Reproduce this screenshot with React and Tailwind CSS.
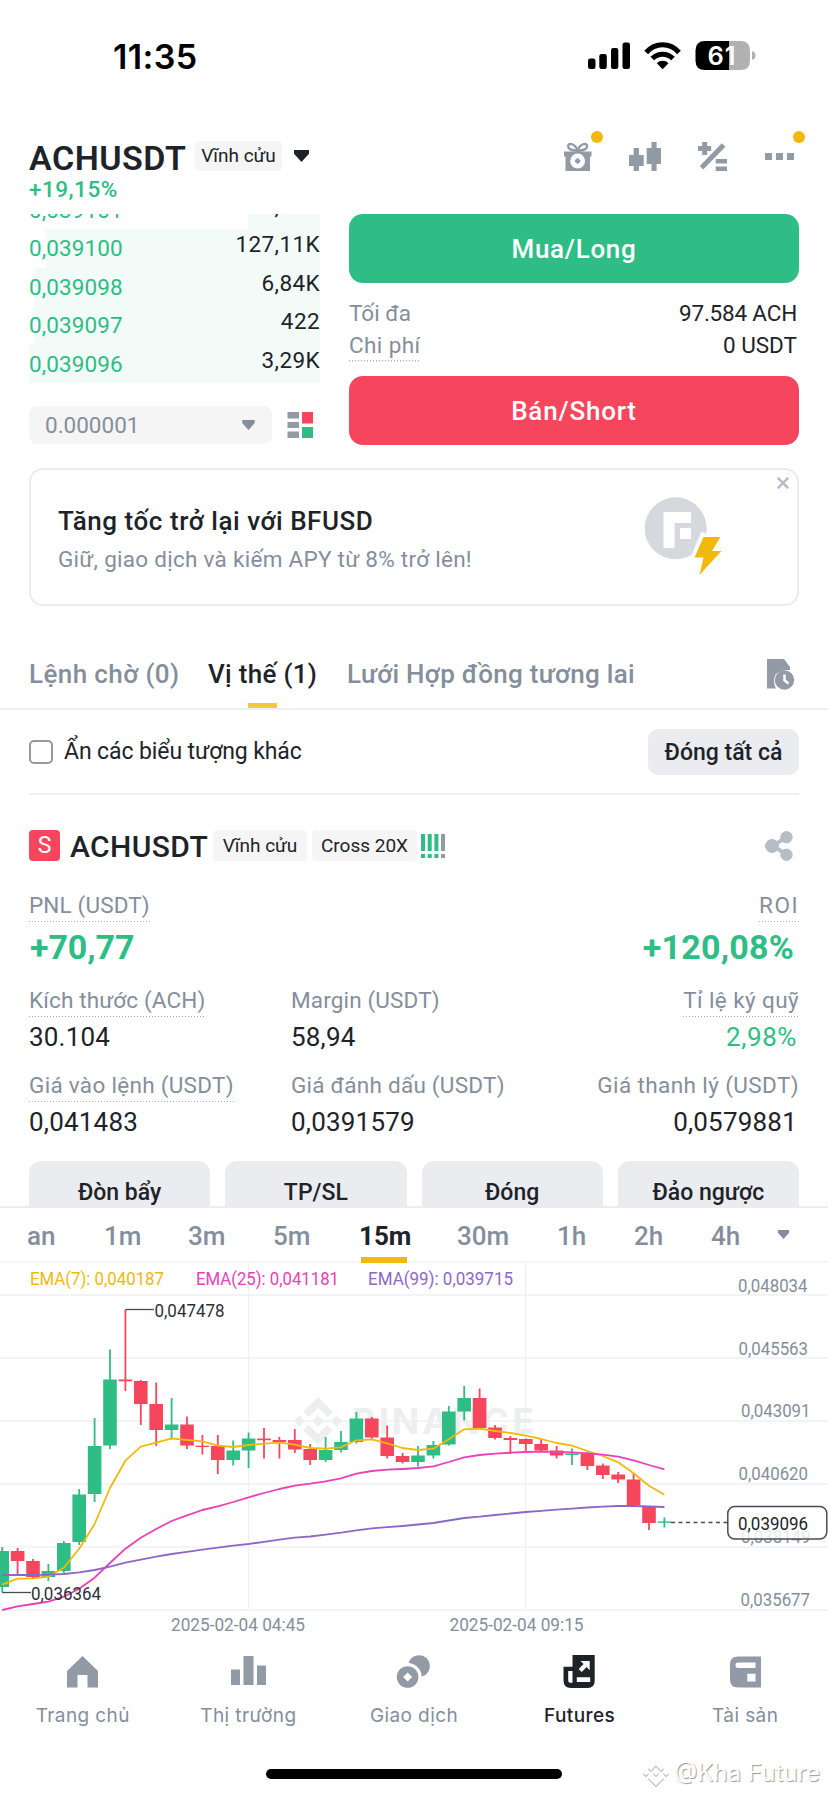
import React from "react"
import { SiBinance } from "react-icons/si"

const asks = [
  { price: "0,039101", amount: "20,99K", bar: "w-[72px]" },
  { price: "0,039100", amount: "127,11K", bar: "w-[274px]" },
  { price: "0,039098", amount: "6,84K", bar: "w-[285px]" },
  { price: "0,039097", amount: "422", bar: "w-[286px]" },
  { price: "0,039096", amount: "3,29K", bar: "w-[291px]" },
]

// [high, body top, body bottom, low, rising]
const candles = [
  [267, 271, 307, 312, 1], [268, 271, 281, 294, 0], [279, 281, 297, 298, 0], [284, 291, 297, 301, 1],
  [261, 263, 291, 293, 1], [209, 214.5, 262, 265, 1], [138, 166, 214, 222, 1], [69.5, 99.5, 165.5, 169, 1],
  [29.5, 99.5, 101.3, 111, 0], [100, 101, 124, 145, 0], [102.5, 124, 150, 166, 0], [118, 144.5, 150, 159.5, 1],
  [136.5, 144.5, 165.5, 169, 0], [155, 165.7, 167, 174.5, 0], [155, 166, 180, 194, 0], [160.5, 170.5, 180, 185.5, 1],
  [152.5, 158.5, 170.5, 188, 1], [148, 158.5, 160.2, 178.5, 0], [157, 160, 162, 178.5, 0], [149, 160, 169.5, 173, 0],
  [164, 169, 180, 185, 0], [157, 170, 180, 182, 1], [151, 162, 170, 172.5, 1], [132, 138.5, 162, 163.5, 1],
  [137, 138.5, 157.5, 159, 0], [145.5, 157.5, 176, 178.5, 0], [173, 176, 182, 183.5, 0], [166, 175.5, 182, 186.5, 1],
  [161, 165, 175.5, 178.5, 1], [126, 131.5, 164.5, 165.5, 1], [106, 118, 131.5, 140.5, 1], [108.5, 118, 148, 149, 0],
  [145, 147.5, 158, 159.5, 0], [156, 158, 160, 174, 0], [158.5, 159, 164, 171.5, 0], [159.5, 164, 170.5, 172, 0],
  [166, 170.5, 175.5, 178.5, 0], [168.5, 173.5, 175, 185, 1], [172, 173.5, 186, 190, 0], [183.5, 185.5, 195, 199, 0],
  [192, 194.5, 199.5, 203, 0], [193.5, 199.5, 225.5, 225.5, 0], [226.5, 226.5, 243, 250, 0], [237.5, 241.4, 242.8, 247.5, 1],
]

const ema7 = [
  304.7, 298.7, 298.3, 296.7, 287.7, 268.7, 244, 208, 180.7, 166.7, 162.7, 158.3, 160, 161.3, 165.7, 167, 165, 163.7, 162.7, 164.7, 168, 168.7,
  167.3, 160.3, 159.3, 163.3, 168, 170, 168.7, 159.3, 149.3, 148.7, 151, 153, 155.7, 159, 163, 165.7, 171, 176, 182.3, 193.3, 205.7, 214.7,
]
const ema25 = [
  330, 326.3, 324, 321.7, 316.7, 308.7, 297.7, 283, 268.7, 257.7, 249, 241, 235.3, 230, 226.3, 222, 217.3, 213, 209, 205.7, 203.7, 201.3,
  198.3, 193.7, 191, 189.7, 189, 188, 186.3, 182, 177.3, 175, 173.7, 172.7, 172, 171.7, 172, 172.3, 173.3, 174.7, 176.7, 180.3, 185, 189.3,
]
const ema99 = [
  295, 295, 295, 294.7, 294, 292.3, 290, 286.7, 282.7, 279.7, 276.7, 274, 271.8, 269.7, 267.7, 265.7, 264, 261.8, 259.7, 257.7, 256.5, 254.7,
  252.7, 250.3, 248.3, 247.2, 246, 244.5, 243, 240.5, 238, 236.7, 235, 233.5, 232, 230.8, 229.7, 228.6, 227.5, 226.7, 226, 226, 226.5, 227,
]

const candleX = (i) => 2.2 + i * 15.4
const toPoints = (values) => values.map((y, i) => `${candleX(i)},${y}`).join(" ")

const priceAxis = [
  ["0,048034", 738, 12], ["0,045563", 738.5, 74.7], ["0,043091", 741, 137.3],
  ["0,040620", 738.5, 200.3], ["0,038149", 741, 263.3], ["0,035677", 740.5, 326],
]

const Triangle = ({ className }) => (
  <svg viewBox="0 0 15 12" className={className} fill="currentColor">
    <path d="M0 0H15V3.7L7.5 12L0 3.7Z" />
  </svg>
)

const StatusBar = () => (
  <div className="flex h-[100px] shrink-0 items-start justify-between pl-[113px] pr-[72px] text-black">
    <span className="mt-[36px] font-[Inter,sans-serif] text-[34px] font-semibold leading-[42px] tracking-[0.4px]">11:35</span>
    <svg className="mt-[41px] h-[30px] w-[168px]" viewBox="588 41 168 30">
      <rect x="588" y="58.500" width="7.500" height="10.500" rx="2.200" />
      <rect x="599.300" y="54" width="7.500" height="15" rx="2.200" />
      <rect x="611" y="48" width="7.300" height="21" rx="2.200" />
      <rect x="622.500" y="42.500" width="7.500" height="26.500" rx="2.200" />
      <g fill="none" stroke="#000" strokeWidth="5">
        <path d="M646.200 52.500C655.300 42.300 670 42.300 679 52.500" />
        <path d="M652.300 58.600C658 52.700 667.200 52.700 673 58.600" />
      </g>
      <path d="M656.800 63.300C659.800 60 665.400 60 668.500 63.300L662.600 69.200Z" />
      <path d="M729 41H740.500Q750 41 750 50.500V60.500Q750 70 740.500 70H729Z" fill="#b1b1b4" />
      <path d="M729 41H705Q695.500 41 695.500 50.500V60.500Q695.500 70 705 70H729Z" />
      <path d="M752 51Q755.500 52 755.500 55.500Q755.500 59 752 60Z" fill="#b1b1b4" />
      <text x="707.500" y="64.800" textLength="28" className="font-[Inter,sans-serif] text-[25.500px] font-semibold" fill="#fff">61</text>
    </svg>
  </div>
)

const Header = () => (
  <header className="flex h-[114px] shrink-0 flex-col px-[29px]">
    <div className="mt-[37px] flex h-[38px] items-center">
      <h1 className="w-[166px] whitespace-nowrap pt-[3px] text-[34px] font-semibold leading-[38px] tracking-[0.5px]">ACHUSDT</h1>
      <span className="flex h-[30px] w-[87px] items-center justify-center rounded bg-[#f5f5f5] pt-px text-[19px]">Vĩnh cửu</span>
      <Triangle className="ml-3 h-3 w-[15px]" />
      <div className="ml-auto flex items-center text-[#929aa5]">
        <div className="relative">
          <svg className="h-[29px] w-[28px]" viewBox="0 0 28 29">
            <path d="M0 9.500H27.500V14.500H26V29H1.500V14.500H0Z" fill="currentColor" />
            <g fill="none" stroke="currentColor" strokeWidth="2.400">
              <path d="M13.500 9C12 2 4 -0.500 4.200 4.500C4.400 8 9 8 13.500 9Z" />
              <path d="M13.700 9C15.200 2 23.200 -0.500 23 4.500C22.800 8 18.200 8 13.700 9Z" />
            </g>
            <circle cx="13.600" cy="19" r="7.400" fill="#fff" />
            <path d="M13.600 15.700L16.900 19L13.600 22.300L10.300 19Z" fill="currentColor" />
          </svg>
          <span className="absolute -top-[11px] left-[27px] size-3 rounded-full bg-[#f0b90b]" />
        </div>
        <svg className="ml-[37px] h-[29px] w-8" viewBox="0 0 32 29" fill="currentColor">
          <path d="M4.700 6H10V13H14.700V24H10V29H4.700V24H0V13H4.700Z" />
          <path d="M22.500 0H27.600V6H32V22H27.600V29H22.500V22H17.700V6H22.500Z" />
        </svg>
        <svg className="ml-[37px] h-[29px] w-[29px]" viewBox="0 0 29 29" fill="currentColor">
          <path d="M4.200 0H9.200V4H13.200V9H9.200V13H4.200V9H0V4H4.200Z" />
          <path d="M23.800 1.200L27.400 4.800L5.200 27.500L1.800 24Z" />
          <path d="M17.700 17H29V21.500H17.700ZM17.700 24.400H29V29H17.700Z" />
        </svg>
        <div className="relative ml-[38px] mr-[5px] flex w-[29px] justify-between">
          <span className="size-[7px] bg-current" />
          <span className="size-[7px] bg-current" />
          <span className="size-[7px] bg-current" />
          <span className="absolute -top-[22px] left-7 size-3 rounded-full bg-[#f0b90b]" />
        </div>
      </div>
    </div>
    <p className="text-[22.500px] font-medium leading-7 tracking-[0.5px] text-[#2ebd85]">+19,15%</p>
  </header>
)

const OrderBook = () => (
  <div className="w-[291px]">
    <div className="flex h-[169px] flex-col justify-end overflow-hidden">
      {asks.map((row) => (
        <div key={row.price} className="relative flex h-[38.500px] shrink-0 items-center justify-between text-[22.500px]">
          <div className={`absolute right-0 h-full bg-[#f3fbf8] ${row.bar}`} />
          <span className="relative pt-0.5 tracking-[0.1px] text-[#2ebd85]">{row.price}</span>
          <span className="relative pb-[6px] tracking-[0.4px]">{row.amount}</span>
        </div>
      ))}
    </div>
    <div className="mt-[23px] flex items-center">
      <div className="flex h-[38px] w-[243px] items-center justify-between rounded-lg bg-[#f5f5f5] pl-4 pr-[17px] text-[22.500px] text-[#848e9c]">
        <span className="pt-0.5">0.000001</span>
        <Triangle className="h-[10px] w-[13px]" />
      </div>
      <svg className="ml-[15px] h-[26px] w-[26px]" viewBox="0 0 26 26">
        <path d="M0.500 0H12V6.500H0.500ZM0.500 10H12V16H0.500ZM0.500 19.500H12V26H0.500Z" fill="#929aa5" />
        <path d="M15 0H26V11.500H15Z" fill="#f6465d" />
        <path d="M15 15H26V26H15Z" fill="#2ebd85" />
      </svg>
    </div>
  </div>
)

const TradeButtons = () => (
  <div className="w-[450px] text-[22.500px]">
    <button className="block h-[68.500px] w-full rounded-[14px] bg-[#2ebd85] pt-0.5 text-[26px] font-medium tracking-[0.7px] text-white">Mua/Long</button>
    <div className="mt-[15px] flex h-8 items-center justify-between pr-0.5">
      <span className="text-[#848e9c]">Tối đa</span>
      <span className="tracking-[-0.2px]">97.584 ACH</span>
    </div>
    <div className="flex h-8 items-start justify-between pr-0.5">
      <Label dotted className="tracking-[0.4px] -mt-px">Chi phí</Label>
      <span className="leading-[30px]">0 USDT</span>
    </div>
    <button className="mt-[14px] block h-[69px] w-full rounded-[14px] bg-[#f6465d] pt-0.5 text-[26px] font-medium tracking-[0.8px] text-white">Bán/Short</button>
  </div>
)

const Label = ({ children, dotted, className = "tracking-[0.15px]" }) => (
  <span
    className={`h-[33px] whitespace-nowrap text-[22.500px] leading-8 text-[#848e9c] ${className} ${
      dotted
        ? "bg-[repeating-linear-gradient(90deg,#a3aab4_0px_1.5px,transparent_1.5px_3px)] bg-[length:100%_1.5px] bg-bottom bg-no-repeat"
        : ""
    }`}
  >
    {children}
  </span>
)

const Banner = () => (
  <section className="relative mx-[29px] mt-6 flex h-[138px] shrink-0 flex-col rounded-[14px] border-2 border-[#eaecef] px-[27px]">
    <h2 className="mt-[34px] text-[26px] font-medium leading-[34px] tracking-[0.550px]">Tăng tốc trở lại với BFUSD</h2>
    <p className="mt-[5px] text-[22.500px] leading-8 tracking-[0.280px] text-[#848e9c]">Giữ, giao dịch và kiếm APY từ 8% trở lên!</p>
    <svg className="absolute left-[614px] top-[27px] h-[80px] w-[80px]" viewBox="645 497 80 80">
      <circle cx="675.700" cy="528.300" r="31" fill="#d5d8dd" />
      <path d="M663.500 512H691V523H674.500V548H663.500Z" fill="#fff" />
      <path d="M680 528H691V539H680Z" fill="#fff" />
      <path d="M702 533L690 561L700 564L718 540Z" fill="#fff" stroke="#fff" strokeWidth="2" />
      <path d="M703.500 537H720.500L712 551H721.500L699.500 575L703.500 557.500H694.500Z" fill="#f0b90b" />
    </svg>
    <svg className="absolute right-[8px] top-[7px] size-3" viewBox="0 0 12 12" stroke="#b7bdc6" strokeWidth="2.500">
      <path d="M0.800 0.800L11.200 11.200M11.200 0.800L0.800 11.200" />
    </svg>
  </section>
)

const Tabs = () => (
  <div className="flex h-[104px] shrink-0 items-end border-b-2 border-[#eeeff1] px-[29px] text-[26px] font-medium text-[#848e9c]">
    <span className="w-[179px] whitespace-nowrap pb-4 leading-9 tracking-[0.4px]">Lệnh chờ (0)</span>
    <span className="relative w-[139px] whitespace-nowrap pb-4 leading-9 tracking-[0.3px] text-[#1e2329]">
      Vị thế (1)
      <span className="absolute bottom-0 left-[40px] h-[5px] w-[29px] bg-[#f5c842]" />
    </span>
    <span className="whitespace-nowrap pb-4 leading-9 tracking-[0.3px]">Lưới Hợp đồng tương lai</span>
    <svg className="mb-[18px] ml-auto mr-1 h-[31px] w-[28px]" viewBox="0 0 28 31">
      <path d="M0 0H17L23 8V11H18Q7 13 7 21Q7 26 9 29.500H0Z" fill="#929aa5" />
      <circle cx="17.500" cy="21" r="9.700" fill="#929aa5" />
      <path d="M17.500 15.500V21.300L21.500 24.500" fill="none" stroke="#fff" strokeWidth="2.500" />
    </svg>
  </div>
)

const FilterRow = () => (
  <div className="mx-[29px] flex h-[85px] shrink-0 items-center justify-between border-b-2 border-[#eeeff1]">
    <label className="flex items-center gap-[11px] text-[23px] tracking-[-0.1px]">
      <span className="size-6 rounded-[5px] border-2 border-[#929aa5]" />
      <span className="pt-0.5">Ẩn các biểu tượng khác</span>
    </label>
    <button className="h-[46px] w-[151px] rounded-[10px] bg-[#eaecef] pt-[3px] text-[23px] font-medium">Đóng tất cả</button>
  </div>
)

const Stat = ({ label, value, dotted, right, green, labelClass }) => (
  <div className={`flex flex-col gap-[5px] ${right ? "items-end" : "items-start"}`}>
    <Label dotted={dotted} className={labelClass}>{label}</Label>
    <span className={`whitespace-nowrap text-[26px] leading-[30px] ${right ? "mr-0.5" : ""} ${green ? "tracking-[0.6px] text-[#2ebd85]" : "tracking-[0.2px]"}`}>
      {value}
    </span>
  </div>
)

const Position = () => (
  <section className="flex h-[411px] shrink-0 flex-col overflow-hidden px-[29px] pt-[35px]">
    <div className="flex h-[31px] shrink-0 items-center">
      <span className="flex size-[31px] items-center justify-center rounded bg-[#f6465d] pt-0.5 text-[23px] text-white">S</span>
      <h2 className="ml-[10px] w-[143px] whitespace-nowrap pt-0.5 text-[30px] font-medium tracking-[0.4px]">ACHUSDT</h2>
      <span className="flex h-[31px] w-[94px] items-center justify-center rounded bg-[#f5f5f5] pt-px text-[19px]">Vĩnh cửu</span>
      <span className="ml-[5px] flex h-[31px] w-[105px] items-center justify-center rounded bg-[#f5f5f5] pt-px text-[19px]">Cross 20X</span>
      <svg className="ml-1 h-6 w-6" viewBox="0 0 24 24">
        <path d="M0 0H4V17H0ZM0 20H4V24H0ZM6.700 0H10.700V17H6.700ZM6.700 20H10.700V24H6.700ZM13.400 0H17.400V17H13.400ZM13.400 20H17.400V24H13.400Z" fill="#2ebd85" />
        <path d="M20 0H24V17H20ZM20 20H24V24H20Z" fill="#929aa5" />
      </svg>
      <svg className="ml-auto mr-[6px] h-[30px] w-7" viewBox="0 0 28 30" fill="#b7bdc6" stroke="#b7bdc6">
        <path d="M22 6L7.500 14.800L22 23.600" fill="none" strokeWidth="4" />
        <circle cx="21.500" cy="6.200" r="5.700" />
        <circle cx="7" cy="15" r="6.500" />
        <circle cx="21.500" cy="23.800" r="5.700" />
      </svg>
    </div>
    <div className="mt-[28px] flex shrink-0 justify-between">
      <div className="flex flex-col items-start gap-[7px]">
        <Label dotted>PNL (USDT)</Label>
        <span className="ml-px text-[34px] font-bold leading-9 tracking-[-0.1px] text-[#2ebd85]">+70,77</span>
      </div>
      <div className="flex flex-col items-end gap-[7px]">
        <Label dotted className="tracking-[1.5px]">ROI</Label>
        <span className="mr-[5px] text-[34px] font-bold leading-9 tracking-[0.2px] text-[#2ebd85]">+120,08%</span>
      </div>
    </div>
    <div className="mt-[19px] grid shrink-0 grid-cols-[262px_1fr_auto] gap-y-[17px]">
      <Stat label="Kích thước (ACH)" value="30.104" dotted />
      <Stat label="Margin (USDT)" value="58,94" />
      <Stat label="Tỉ lệ ký quỹ" value="2,98%" dotted right green labelClass="tracking-[0.4px]" />
      <Stat label="Giá vào lệnh (USDT)" value="0,041483" dotted labelClass="tracking-[0.3px]" />
      <Stat label="Giá đánh dấu (USDT)" value="0,0391579" labelClass="tracking-[0.250px]" />
      <Stat label="Giá thanh lý (USDT)" value="0,0579881" right labelClass="tracking-[0.4px]" />
    </div>
    <div className="mt-6 grid shrink-0 grid-cols-4 gap-x-[15px] text-[23px] font-medium">
      <button className="h-[62px] rounded-[12px] bg-[#eaecef] pt-0.5">Đòn bẩy</button>
      <button className="h-[62px] rounded-[12px] bg-[#eaecef] pt-0.5">TP/SL</button>
      <button className="h-[62px] rounded-[12px] bg-[#eaecef] pt-0.5">Đóng</button>
      <button className="h-[62px] rounded-[12px] bg-[#eaecef] pt-0.5">Đảo ngược</button>
    </div>
  </section>
)

const Timeframes = () => (
  <div className="flex h-[57px] shrink-0 border-b-2 border-t-2 border-b-[#f5f5f5] border-t-[#eaecef] pl-[28px] text-[26px] font-medium leading-[56px] text-[#848e9c]">
    <div className="flex w-[76px] shrink-0 overflow-hidden"><span className="-ml-px">an</span></div>
    <span className="w-[84px] shrink-0">1m</span>
    <span className="w-[85px] shrink-0">3m</span>
    <span className="w-[86px] shrink-0">5m</span>
    <span className="relative w-[98px] shrink-0 font-bold text-[#1e2329]">
      15m
      <span className="absolute -bottom-0.5 left-[2px] h-[6px] w-[46px] bg-[#f0b90b]" />
    </span>
    <span className="w-[100px] shrink-0">30m</span>
    <span className="w-[77px] shrink-0">1h</span>
    <span className="w-[77px] shrink-0">2h</span>
    <span className="w-[66px] shrink-0">4h</span>
    <Triangle className="mt-[22px] h-[9px] w-[13px]" />
  </div>
)

const ChartText = ({ x, y, width, fill, children }) => (
  <text x={x} y={y} textLength={width} lengthAdjust="spacingAndGlyphs" fill={fill}>{children}</text>
)

const Chart = () => (
  <svg className="block h-[377px] w-[828px] shrink-0 text-[18px]" viewBox="0 -17 828 377" fill="#848e9c">
    <g stroke="#f3f4f5" strokeWidth="2">
      {[15, 78, 141, 204, 267, 330].map((y) => (
        <path key={y} d={`M0 ${y}H828`} />
      ))}
      <path d="M248.500 -17V330M525.500 -17V330" stroke="#eef0f2" strokeWidth="1.300" />
    </g>
    <g fill="#edeef0">
      <SiBinance x="294" y="117" size="48" color="#edeef0" />
      <text x="352" y="154" textLength="182" className="font-[Inter,sans-serif] text-[36px] font-bold">BINANCE</text>
    </g>

    <ChartText x="30" y="5" width="134" fill="#f0b90b">EMA(7): 0,040187</ChartText>
    <ChartText x="196" y="5" width="143" fill="#eb40b5">EMA(25): 0,041181</ChartText>
    <ChartText x="368" y="5" width="145" fill="#8d67c8">EMA(99): 0,039715</ChartText>

    {candles.map(([high, top, bottom, low, up], i) => (
      <g key={i} fill={up ? "#2ebd85" : "#f6465d"}>
        <rect x={candleX(i) - 0.9} y={high} width="1.800" height={low - high} />
        <rect x={candleX(i) - 6.8} y={top} width="13.600" height={bottom - top} />
      </g>
    ))}

    <g fill="none" strokeWidth="1.800" strokeLinejoin="round">
      <polyline points={toPoints(ema7)} stroke="#f0b90b" />
      <polyline points={toPoints(ema25)} stroke="#eb40b5" />
      <polyline points={toPoints(ema99)} stroke="#8d67c8" />
    </g>

    <g stroke="#474d57" strokeWidth="1.300">
      <path d="M125.500 29.500H154" />
      <path d="M2 312.500H31" />
    </g>
    <ChartText x="154.500" y="36.500" width="70" fill="#2b3139">0,047478</ChartText>
    <ChartText x="31" y="319.500" width="70" fill="#2b3139">0,036364</ChartText>

    {priceAxis.map(([price, x, y]) => (
      <ChartText key={price} x={x} y={y} width="69.500">{price}</ChartText>
    ))}
    <path d="M671 242.500H727" stroke="#474d57" strokeWidth="1.500" strokeDasharray="4 3.500" />
    <rect x="727.800" y="226.500" width="99" height="32.500" rx="7" fill="#fff" fillOpacity="0.800" stroke="#474d57" strokeWidth="1.500" />
    <ChartText x="738" y="250" width="70" fill="#1e2329">0,039096</ChartText>

    <ChartText x="171" y="351" width="134">2025-02-04 04:45</ChartText>
    <ChartText x="449.500" y="351" width="134">2025-02-04 09:15</ChartText>
  </svg>
)

const navItems = [
  {
    label: "Trang chủ",
    icon: <path d="M16.500 1L32 16V32.500H21.500V20H11.500V32.500H1V16Z" />,
  },
  {
    label: "Thị trường",
    icon: <path d="M-1 14.500H8V30H-1ZM11.500 1H21.500V30H11.500ZM25 10.500H34V30H25Z" />,
  },
  {
    label: "Giao dịch",
    icon: (
      <>
        <circle cx="22" cy="11" r="10.800" />
        <circle cx="10.600" cy="22" r="14" fill="#fff" />
        <path fillRule="evenodd" d="M10.600 11.200A10.800 10.800 0 1 1 10.600 32.800A10.800 10.800 0 1 1 10.600 11.200ZM10.600 17.500L6.100 22L10.600 26.500L15.100 22Z" />
      </>
    ),
  },
  {
    label: "Futures",
    active: true,
    icon: (
      <>
        <path d="M9.500 0H31.700V25.500Q31.700 33 24.500 33H8Q0.500 33 0.500 25.500V11.700H9.500Z" />
        <path d="M5.200 16H9.500V27.700H7.200Q5.200 27.700 5.200 25.500ZM13.800 22.300H27.200V27H13.800Z" fill="#fff" />
        <path d="M17.500 6H26.700V15.200L23.600 12.100L18.700 17L15.700 14L20.600 9.100Z" fill="#fff" />
      </>
    ),
  },
  {
    label: "Tài sản",
    icon: (
      <path fillRule="evenodd" d="M9 1.500H32V32.500H9Q1 32.500 1 24.500V9.500Q1 1.500 9 1.500ZM9 7.500Q6.500 7.500 6.500 10.200Q6.500 12.900 9 12.900H26.500V7.500ZM18.300 18.700V26.500H26.500V18.700Z" />
    ),
  },
]

const BottomNav = () => (
  <nav className="grid h-[111px] shrink-0 grid-cols-5 pt-[15px]">
    {navItems.map((item) => (
      <div key={item.label} className={`flex flex-col items-center ${item.active ? "text-[#1e2329]" : "text-[#929aa5]"}`}>
        <svg className="h-[34px] w-[33px] overflow-visible" viewBox="0 0 33 34" fill="currentColor">{item.icon}</svg>
        <span className={`mt-[12px] font-[Inter,sans-serif] text-[19px] leading-[30px] tracking-[0.4px] ${item.active ? "font-medium" : "text-[#848e9c]"}`}>
          {item.label}
        </span>
      </div>
    ))}
  </nav>
)

export default function App() {
  return (
    <div className="relative flex h-[1795px] w-[828px] flex-col overflow-hidden bg-white font-[Roboto,sans-serif] text-[#1e2329]">
      <StatusBar />
      <Header />
      <main className="flex h-[230px] shrink-0 justify-between px-[29px]">
        <OrderBook />
        <TradeButtons />
      </main>
      <Banner />
      <Tabs />
      <FilterRow />
      <Position />
      <Timeframes />
      <Chart />
      <BottomNav />
      <div className="mx-auto mt-[18px] h-[10px] w-[296px] rounded-full bg-black" />
      <div className="absolute bottom-[4px] right-[8px] flex items-center gap-[5px] text-white">
        <SiBinance className="size-[26px] drop-shadow-[0_1px_0.5px_#999]" />
        <span className="font-[Inter,sans-serif] text-[24px] leading-9 [text-shadow:1px_1px_1px_#999]">@Kha Future</span>
      </div>
    </div>
  )
}
